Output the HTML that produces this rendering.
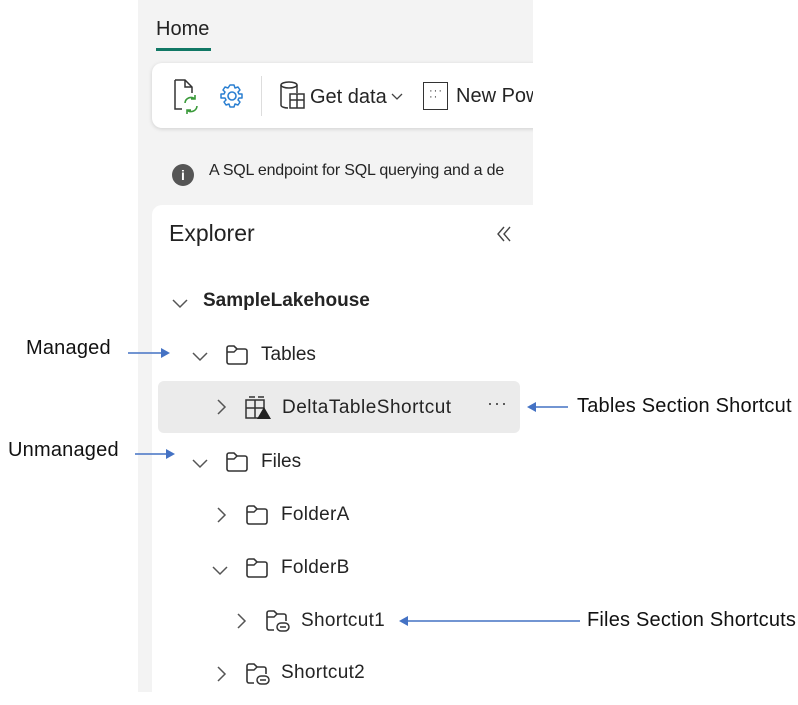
<!DOCTYPE html>
<html><head><style>
body{margin:0;width:798px;height:692px;background:#fff;position:relative;overflow:hidden;font-family:"Segoe UI","Liberation Sans",sans-serif;color:#242424}
.a{position:absolute}
.t{position:absolute;font-size:19px;white-space:nowrap;letter-spacing:0px}
.an{position:absolute;font-size:20px;color:#111;white-space:nowrap;letter-spacing:0.2px}
</style></head><body>
<div class="a" style="left:138px;top:0;width:395px;height:692px;background:#f3f3f3"></div>
<div class="t" style="left:156px;top:18px;font-size:20px;color:#222">Home</div>
<div class="a" style="left:156px;top:48px;width:55px;height:3px;background:#117865"></div>
<div class="a" style="left:152px;top:63px;width:395px;height:65px;background:#fff;border-radius:10px;box-shadow:0 1px 4px rgba(0,0,0,.15)"></div>
<svg class="a" style="left:172px;top:78px" width="32" height="36" viewBox="0 0 32 36" fill="none">
<path d="M3 2h10l7 7v6M3 2v29h7" stroke="#333" stroke-width="1.5"/><path d="M13 2v7h7" stroke="#333" stroke-width="1.5"/>
<path d="M13 25a6 6 0 0 1 10-4M23 17v4h-4" stroke="#3a9a3a" stroke-width="1.6"/><path d="M25 28a6 6 0 0 1-10 4M15 36v-4h4" stroke="#3a9a3a" stroke-width="1.6"/></svg>
<svg class="a" style="left:218px;top:82px" width="28" height="28" viewBox="0 0 28 28" fill="none"><circle cx="14" cy="14" r="4" stroke="#2a7fd1" stroke-width="1.6"/><path d="M12 3h4l1 3 3-1 2 3-2 2 1 2h3v4h-3l-1 2 2 2-2 3-3-1-1 3h-4l-1-3-3 1-2-3 2-2-1-2H3v-4h3l1-2-2-2 2-3 3 1z" stroke="#2a7fd1" stroke-width="1.5" stroke-linejoin="round"/></svg>
<div class="a" style="left:261px;top:76px;width:1px;height:40px;background:#ddd"></div>
<svg class="a" style="left:279px;top:80px" width="28" height="32" viewBox="0 0 28 32" fill="none"><ellipse cx="10" cy="5" rx="8" ry="3" stroke="#333" stroke-width="1.5"/><path d="M2 5v20c0 2 4 3 7 3M18 5v8" stroke="#333" stroke-width="1.5"/><rect x="11" y="14" width="14" height="14" stroke="#333" stroke-width="1.5"/><path d="M11 20h14M18 14v14" stroke="#333" stroke-width="1.5"/></svg>
<div class="t" style="left:310px;top:86px;font-size:20px">Get data</div>
<svg class="a" style="left:391px;top:93px" width="12" height="8"><path d="M1 1l5 5 5-5" stroke="#444" stroke-width="1.3" fill="none"/></svg>
<div class="a" style="left:423px;top:82px;width:23px;height:26px;border:1.6px solid #333"></div>
<div class="a" style="left:429px;top:88px;font-size:11px;letter-spacing:1px;line-height:6px;color:#333">···<br>··</div>
<div class="t" style="left:456px;top:85px;font-size:20px">New Pow</div>
<div class="a" style="left:172px;top:164px;width:22px;height:22px;border-radius:50%;background:#555;color:#fff;font-size:14px;font-weight:bold;text-align:center;line-height:22px">i</div>
<div class="t" style="left:209px;top:162px;font-size:16px;letter-spacing:-0.2px">A SQL endpoint for SQL querying and a de</div>
<div class="a" style="left:152px;top:205px;width:400px;height:500px;background:#fff;border-radius:10px"></div>
<div class="a" style="left:533px;top:0;width:265px;height:692px;background:#fff"></div>
<div class="t" style="left:169px;top:220px;font-size:23px;color:#222">Explorer</div>
<svg class="a" style="left:496px;top:225px" width="18" height="18" fill="none" stroke="#444" stroke-width="1.4"><path d="M8 2L2 9l6 7M14 2L8 9l6 7"/></svg>
<svg class="a" width="0" height="0"><defs>
<path id="dn" d="M1 1l7 7 7-7" stroke="#555" stroke-width="1.5" fill="none"/>
<path id="rt" d="M1 1l7 7-7 7" stroke="#555" stroke-width="1.5" fill="none"/>
<g id="fold" fill="none" stroke="#333" stroke-width="1.6"><path d="M2 4a2 2 0 0 1 2-2h5l3 3h8a2 2 0 0 1 2 2v11a2 2 0 0 1-2 2H4a2 2 0 0 1-2-2z"/><path d="M2 8h7l3-3" stroke-width="1.4"/></g>
<g id="sc" fill="none" stroke="#333"><path d="M9 21H4a2 2 0 0 1-2-2V4a2 2 0 0 1 2-2h5l3 3h7a2 2 0 0 1 2 2v5" stroke-width="1.6"/><path d="M2 8h7l3-3" stroke-width="1.4"/><rect x="12" y="14" width="12" height="8" rx="4" stroke-width="1.5"/><path d="M15 18h6" stroke-width="1.5"/></g>
</defs></svg>
<svg class="a" style="left:172px;top:299px" width="16" height="10"><use href="#dn"/></svg>
<div class="t" style="left:203px;top:290px;font-weight:bold;font-size:19px">SampleLakehouse</div>
<svg class="a" style="left:192px;top:352px" width="16" height="10"><use href="#dn"/></svg>
<svg class="a" style="left:225px;top:344px" width="24" height="22"><use href="#fold"/></svg>
<div class="t" style="left:261px;top:344px">Tables</div>
<div class="a" style="left:158px;top:381px;width:362px;height:52px;background:#ebebeb;border-radius:6px"></div>
<svg class="a" style="left:217px;top:399px" width="10" height="16"><use href="#rt"/></svg>
<svg class="a" style="left:243px;top:394px" width="30" height="28" viewBox="0 0 30 28" fill="none"><rect x="3" y="6" width="18" height="18" stroke="#333" stroke-width="1.5"/><path d="M3 14h18M12 6v18" stroke="#333" stroke-width="1.5"/><path d="M6 3h6M15 3h6" stroke="#333" stroke-width="1.5"/><path d="M21 13l7 12h-14z" fill="#222"/></svg>
<div class="t" style="left:282px;top:397px;letter-spacing:0.5px">DeltaTableShortcut</div>
<div class="t" style="left:487px;top:393px;font-size:18px;color:#444;letter-spacing:1px">···</div>
<svg class="a" style="left:192px;top:459px" width="16" height="10"><use href="#dn"/></svg>
<svg class="a" style="left:225px;top:451px" width="24" height="22"><use href="#fold"/></svg>
<div class="t" style="left:261px;top:451px">Files</div>
<svg class="a" style="left:217px;top:507px" width="10" height="16"><use href="#rt"/></svg>
<svg class="a" style="left:245px;top:504px" width="24" height="22"><use href="#fold"/></svg>
<div class="t" style="left:281px;top:504px;letter-spacing:0.3px">FolderA</div>
<svg class="a" style="left:212px;top:566px" width="16" height="10"><use href="#dn"/></svg>
<svg class="a" style="left:245px;top:557px" width="24" height="22"><use href="#fold"/></svg>
<div class="t" style="left:281px;top:557px;letter-spacing:0.3px">FolderB</div>
<svg class="a" style="left:237px;top:613px" width="10" height="16"><use href="#rt"/></svg>
<svg class="a" style="left:265px;top:609px" width="26" height="24"><use href="#sc"/></svg>
<div class="t" style="left:301px;top:610px;letter-spacing:0.3px">Shortcut1</div>
<svg class="a" style="left:217px;top:666px" width="10" height="16"><use href="#rt"/></svg>
<svg class="a" style="left:245px;top:662px" width="26" height="24"><use href="#sc"/></svg>
<div class="t" style="left:281px;top:662px;letter-spacing:0.3px">Shortcut2</div>
<div class="an" style="left:26px;top:337px">Managed</div>
<div class="an" style="left:8px;top:439px">Unmanaged</div>
<div class="an" style="left:577px;top:395px">Tables Section Shortcut</div>
<div class="an" style="left:587px;top:609px">Files Section Shortcuts</div>
<svg class="a" style="left:0;top:0" width="798" height="692">
<g stroke="#4472c4" stroke-width="1.5" fill="#4472c4">
<line x1="128" y1="353" x2="162" y2="353"/><path d="M170 353l-9-5v10z" stroke="none"/>
<line x1="135" y1="454" x2="167" y2="454"/><path d="M175 454l-9-5v10z" stroke="none"/>
<line x1="536" y1="407" x2="568" y2="407"/><path d="M527 407l9-5v10z" stroke="none"/>
<line x1="408" y1="621" x2="580" y2="621"/><path d="M399 621l9-5v10z" stroke="none"/>
</g></svg>
</body></html>
